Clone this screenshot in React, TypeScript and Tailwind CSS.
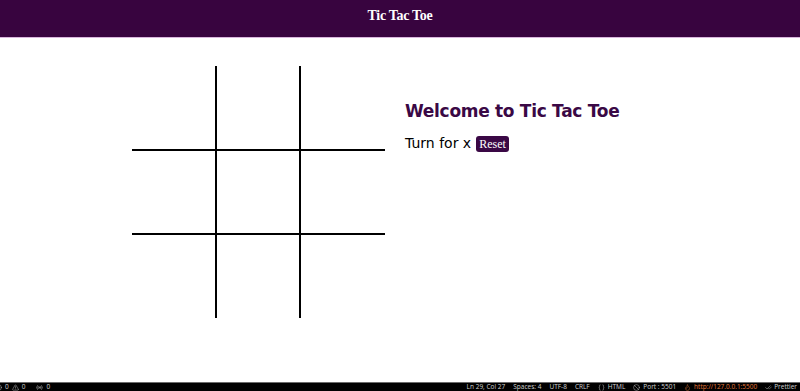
import { Ban, CheckCheck, Braces, Radio, TriangleAlert, CircleX, Flame } from "lucide-react";

const CELLS = [
  "border-r-2 border-b-2",
  "border-r-2 border-b-2",
  "border-b-2",
  "border-r-2 border-b-2",
  "border-r-2 border-b-2",
  "border-b-2",
  "border-r-2",
  "border-r-2",
  "",
];

function Board() {
  return (
    <div className="grid w-[253px] grid-cols-[85px_84px_84px] grid-rows-[85px_84px_83px]">
      {CELLS.map((c, i) => (
        <div key={i} className={`border-black ${c}`} />
      ))}
    </div>
  );
}

function StatusBar() {
  return (
    <footer className="flex h-[9px] items-center justify-between border-t border-[#6b6b6b] bg-black font-['Open_Sans',sans-serif] text-[6.5px] leading-none text-[#cfcfcf]">
      <div className="-ml-[5px] flex items-center gap-[3px]">
        <CircleX size={7} strokeWidth={1.5} />
        <span>0</span>
        <TriangleAlert size={7} strokeWidth={1.5} />
        <span>0</span>
        <Radio size={7} strokeWidth={1.5} className="ml-[8px]" />
        <span>0</span>
      </div>
      <div className="mr-[3px] flex items-center gap-[8px]">
        <span>Ln 29, Col 27</span>
        <span>Spaces: 4</span>
        <span>UTF-8</span>
        <span>CRLF</span>
        <span className="flex items-center gap-[3px]">
          <Braces size={7} strokeWidth={1.5} />
          HTML
        </span>
        <span className="flex items-center gap-[3px]">
          <Ban size={7} strokeWidth={1.5} />
          Port : 5501
        </span>
        <span className="flex items-center gap-[3px] text-[#e0773a]">
          <Flame size={7} strokeWidth={1.5} />
          http://127.0.0.1:5500
        </span>
        <span className="flex items-center gap-[2px]">
          <CheckCheck size={7} strokeWidth={1.5} />
          Prettier
        </span>
      </div>
    </footer>
  );
}

export default function App() {
  return (
    <div className="flex h-screen flex-col bg-white">
      <header className="flex h-[38px] shrink-0 justify-center border-b border-[#d9b6dd] bg-[#38043f] pt-[5px]">
        <h1 className="font-['Liberation_Serif',serif] text-[14px] font-bold tracking-[-0.3px] text-white">
          Tic Tac Toe
        </h1>
      </header>

      <main className="flex min-h-0 flex-1 pl-[132px] pt-[28px]">
        <Board />
        <div className="ml-[20px] pt-[33px] font-['Comic_Sans_MS','DejaVu_Sans',sans-serif]">
          <h2 className="text-[17px] font-bold leading-[24px] tracking-[-0.3px] text-[#3a0845]">
            Welcome to Tic Tac Toe
          </h2>
          <div className="mt-[10px] flex items-center gap-[5px] text-[14px] text-black">
            <span>Turn for x</span>
            <button
              type="button"
              className="h-[16px] rounded-[3px] bg-[#3a0845] px-[3px] font-['Liberation_Serif',serif] text-[12px] leading-[16px] text-white"
            >
              Reset
            </button>
          </div>
        </div>
      </main>

      <StatusBar />
    </div>
  );
}
